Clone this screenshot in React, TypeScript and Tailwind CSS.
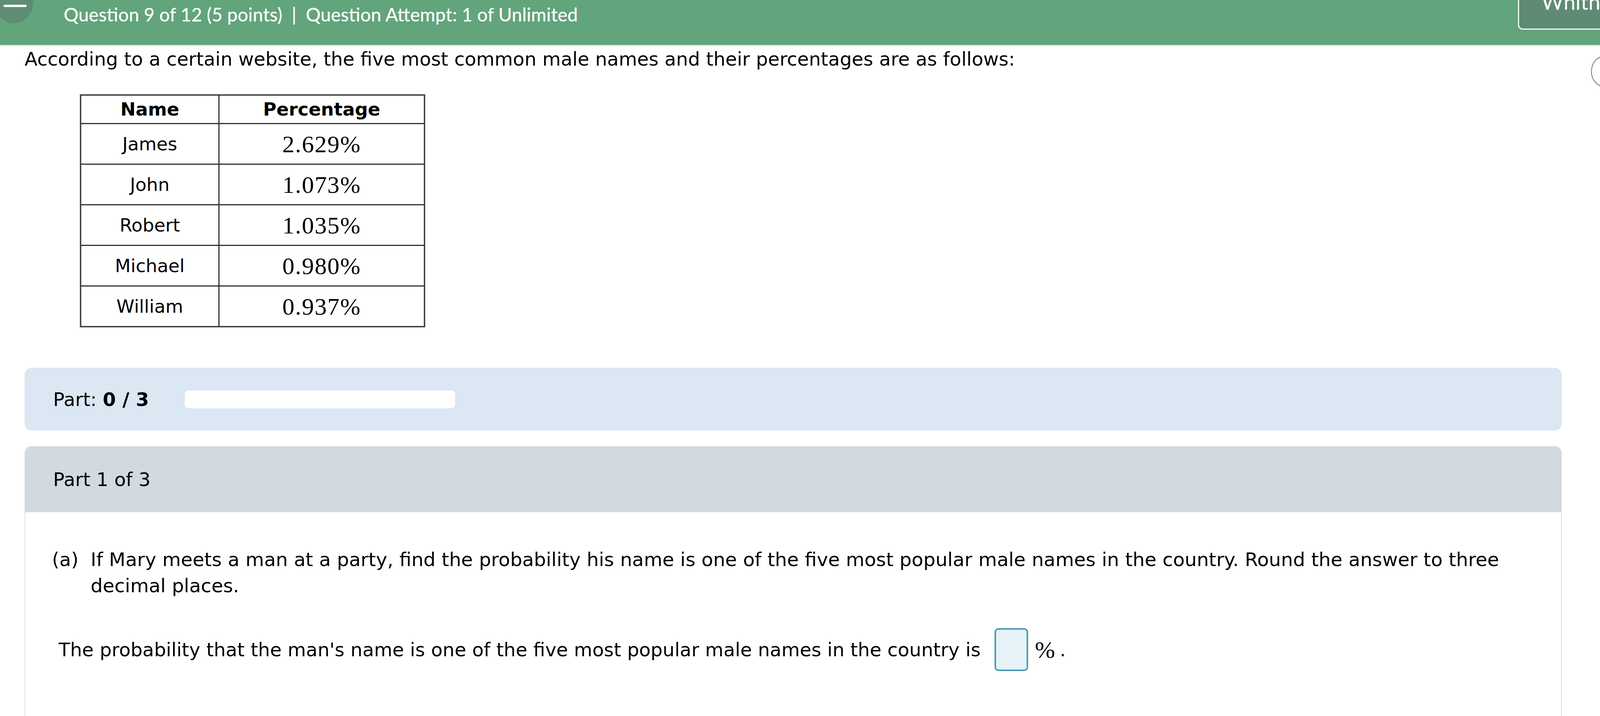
import React from "react";

const rows: [string, string][] = [
  ["James", "2.629%"],
  ["John", "1.073%"],
  ["Robert", "1.035%"],
  ["Michael", "0.980%"],
  ["William", "0.937%"],
];

const serif = { fontFamily: '"Liberation Serif", "Times New Roman", serif' };
const headerFont = { fontFamily: 'Lato, "Open Sans", sans-serif' };

export default function App() {
  return (
    <div
      className="relative h-[1834px] w-full overflow-hidden bg-white text-black"
      style={{ fontFamily: '"DejaVu Sans", Verdana, sans-serif' }}
    >
      {/* Header */}
      <div className="relative h-[118px] overflow-hidden border-b-[3px] border-[#d3ecdb] bg-[#62a47b]">
        <div className="absolute left-[-16px] top-[-58px] h-[118px] w-[102px] rounded-[50%] bg-[#5e8d74]" />
        <div className="absolute left-[9px] top-[12px] h-[6px] w-[59px] rounded-full bg-white" />
        <div
          className="absolute left-[163px] top-[4px] whitespace-nowrap text-[47.5px] font-medium leading-[66px] text-white"
          style={headerFont}
        >
          Question 9 of 12 (5 points) &nbsp;|&nbsp; Question Attempt: 1 of Unlimited
        </div>
        <div
          className="absolute right-0 top-[-40px] h-[116px] w-[210px] overflow-hidden whitespace-nowrap rounded-bl-[12px] border-b-[3px] border-l-[3px] border-[#eafff1] bg-[#5f8b74] pl-[57px] pt-[14px] text-[55px] leading-[60px] text-white"
          style={headerFont}
        >
          Whitney
        </div>
      </div>

      {/* Right side circle, partly outside the window */}
      <div className="absolute right-0 top-[143px] h-[80px] w-[23px] overflow-hidden">
        <div className="h-[80px] w-[69px] rounded-[50%] border-2 border-[#777]" />
      </div>

      {/* Content */}
      <div className="pl-[63px] pr-[98px]">
        <p className="pt-[3px] text-[48.3px] leading-[60px]">
          According to a certain website, the five most common male names and their percentages are as follows:
        </p>

        <table className="ml-[142px] mt-[61px] border-collapse border-[3px] border-[#333] shadow-[0_0_0_2px_#d4d4d4]">
          <thead>
            <tr className="h-[73px]">
              <th className="w-[354px] border-[3px] border-[#333] text-[46.6px] font-bold leading-[60px]">Name</th>
              <th className="w-[526px] border-[3px] border-[#333] text-[46.6px] font-bold leading-[60px]">Percentage</th>
            </tr>
          </thead>
          <tbody>
            {rows.map(([n, p]) => (
              <tr key={n} className="h-[104px]">
                <td className="border-[3px] border-[#333] text-center text-[46.6px] leading-[60px]">{n}</td>
                <td className="border-[3px] border-[#333] text-center text-[62px] leading-[72px] tracking-[1.7px]" style={serif}>
                  {p}
                </td>
              </tr>
            ))}
          </tbody>
        </table>

        {/* Part progress panel */}
        <div className="mt-[104px] flex h-[161px] items-center rounded-[18px] bg-[#dbe7f3] pl-[73px]">
          <span className="w-[337px] shrink-0 text-[48.3px] leading-[60px]">
            Part: <span className="font-bold">0 / 3</span>
          </span>
          <div className="h-[46px] w-[692px] rounded-[10px] bg-white" />
        </div>

        {/* Part 1 of 3 */}
        <div className="mt-[40px]">
          <div className="flex h-[169px] items-center rounded-t-[18px] bg-[#d2d9e0] pl-[73px]">
            <span className="text-[48.3px] leading-[60px]">Part 1 of 3</span>
          </div>
          <div className="h-[600px] border-x-2 border-[#dde1e5] bg-white">
            <div className="flex pl-[68px] pt-[88px] text-[48.8px] leading-[67px]">
              <span className="w-[99px] shrink-0">(a)</span>
              <span>
                If Mary meets a man at a party, find the probability his name is one of the five most popular male names in the country. Round the answer to three
                <br />
                decimal places.
              </span>
            </div>
            <div className="mt-[75px] flex items-center pl-[85px] text-[48.3px] leading-[67px]">
              <span className="whitespace-nowrap">
                The probability that the man's name is one of the five most popular male names in the country is
              </span>
              <span className="ml-[36px] inline-block h-[110px] w-[86px] shrink-0 rounded-[10px] border-[4px] border-[#4a9db3] bg-[#e6f3f8]" />
              <span className="ml-[17px] text-[62px] leading-[67px]" style={serif}>
                %
              </span>
              <span className="ml-[12px]">.</span>
            </div>
          </div>
        </div>
      </div>
    </div>
  );
}
